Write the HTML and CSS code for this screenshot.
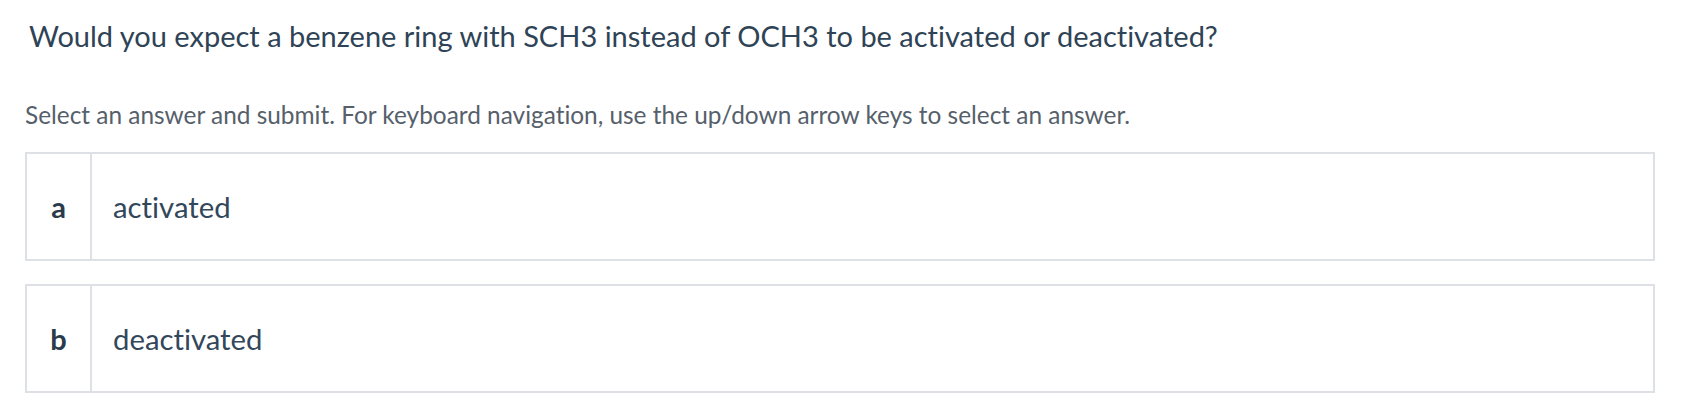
FILE: index.html
```html
<!DOCTYPE html>
<html lang="en">
<head>
<meta charset="utf-8">
<title>Question</title>
<link rel="stylesheet" href="styles.css">
</head>
<body>
<main class="question">
  <h1 class="question-title">Would you expect a benzene ring with SCH3 instead of OCH3 to be activated or deactivated?</h1>
  <p class="question-hint">Select an answer and submit. For keyboard navigation, use the up/down arrow keys to select an answer.</p>
  <div class="answers" role="radiogroup">
    <div class="answer" role="radio" aria-checked="false" tabindex="0">
      <span class="answer-letter">a</span>
      <span class="answer-text">activated</span>
    </div>
    <div class="answer" role="radio" aria-checked="false" tabindex="-1">
      <span class="answer-letter">b</span>
      <span class="answer-text">deactivated</span>
    </div>
  </div>
</main>
</body>
</html>
```
FILE: styles.css
```css
* { box-sizing: border-box; }

html, body {
  margin: 0;
  padding: 0;
  background: #ffffff;
}

body {
  font-family: "Lato", "Noto Sans", sans-serif;
  font-variant-ligatures: none;
  font-feature-settings: "liga" 0, "clig" 0;
  color: #33475b;
}

.question {
  padding: 18px 29px 0 25px;
  display: flex;
  flex-direction: column;
}

.question-title {
  margin: 0;
  padding-left: 4px;
  font-size: 29px;
  line-height: 36px;
  font-weight: 400;
  color: #2f4356;
}

.question-hint {
  margin: 46px 0 0 0;
  font-size: 24.4px;
  line-height: 30px;
  font-weight: 400;
  color: #56606b;
}

.answers {
  margin-top: 22px;
  display: flex;
  flex-direction: column;
  gap: 23px;
}

.answer {
  display: flex;
  align-items: stretch;
  height: 109px;
  border: 2px solid #dde0e5;
  background: #ffffff;
}

.answer-letter {
  flex: 0 0 65px;
  display: flex;
  align-items: center;
  justify-content: center;
  border-right: 2px solid #dde0e5;
  font-size: 29px;
  font-weight: 700;
  color: #2a3b4c;
}

.answer-text {
  display: flex;
  align-items: center;
  padding-left: 21px;
  font-size: 29.3px;
  font-weight: 400;
  color: #33475b;
}
```
